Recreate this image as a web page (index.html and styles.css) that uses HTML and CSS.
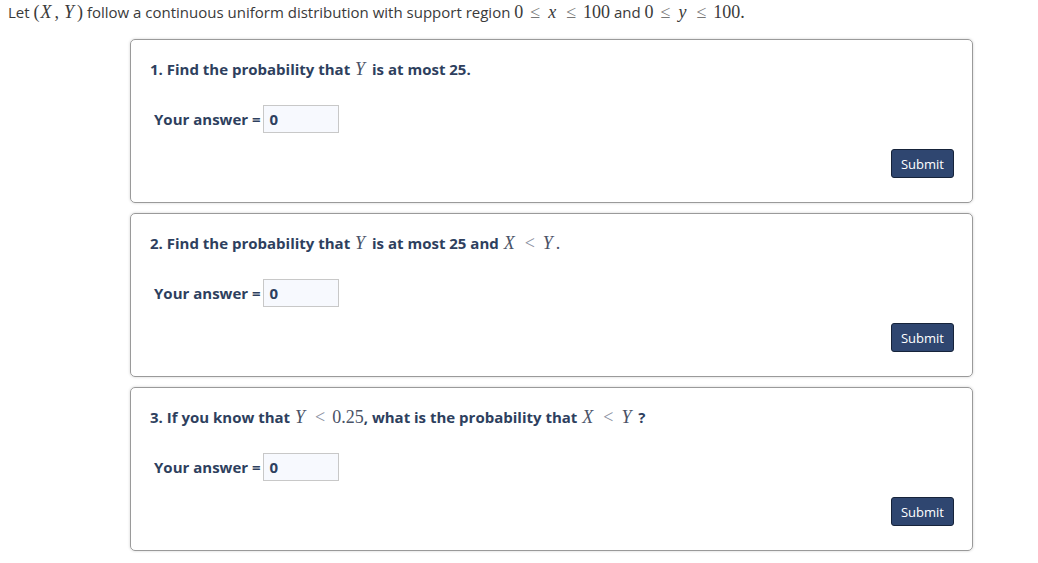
FILE: index.html
```html
<!DOCTYPE html>
<html>
<head>
<meta charset="utf-8">
<link rel="stylesheet" href="styles.css">
</head>
<body>
<p class="intro">Let <span class="m">(<i>X</i>,<span class="sp"></span><i>Y</i>)</span> follow a continuous uniform distribution with support region <span class="m">0<span class="rel">≤</span><i>x</i><span class="rel">≤</span>100</span> and <span class="m">0<span class="rel">≤</span><i>y</i><span class="rel">≤</span>100.</span></p>
<div class="cards">
  <div class="card">
    <p class="q">1. Find the probability that <span class="m"><i>Y</i></span> is at most 25.</p>
    <div class="ans"><span class="lbl">Your answer =</span><span class="inp">0</span></div>
    <div class="actions"><button class="btn">Submit</button></div>
  </div>
  <div class="card">
    <p class="q">2. Find the probability that <span class="m"><i>Y</i></span> is at most 25 and <span class="m"><i>X</i><span class="rel">&lt;</span><i>Y</i>.</span></p>
    <div class="ans"><span class="lbl">Your answer =</span><span class="inp">0</span></div>
    <div class="actions"><button class="btn">Submit</button></div>
  </div>
  <div class="card">
    <p class="q">3. If you know that <span class="m"><i>Y</i><span class="rel">&lt;</span>0.25</span>, what is the probability that <span class="m"><i>X</i><span class="rel">&lt;</span><i>Y</i></span> ?</p>
    <div class="ans"><span class="lbl">Your answer =</span><span class="inp">0</span></div>
    <div class="actions"><button class="btn">Submit</button></div>
  </div>
</div>
</body>
</html>
```
FILE: styles.css
```css
html, body { margin: 0; padding: 0; background: #fff; }
body { padding: 2px 8px; font-family: "Open Sans", "Liberation Sans", sans-serif; font-size: 15px; color: #3a3a3a; }
.intro { margin: 0; line-height: 20px; }
.m { font-family: "Liberation Serif", "DejaVu Serif", serif; font-size: 18px; font-weight: normal; color: #3a3a3a; line-height: 0; }
.m i { padding: 0 3px 0 1px; }
.rel { margin: 0 7px; color: #777; }
.sp { display: inline-block; width: 4px; }
.q .m { color: #4a5266; }
.q .m .rel { color: #8a8fa0; }
.cards { margin: 17px 0 0 122px; width: 843px; display: flex; flex-direction: column; gap: 10px; }
.card { border: 1px solid #9a9a9a; border-radius: 5px; box-shadow: 0 0 3px rgba(0,0,0,0.18); padding: 19px 18px 24px 19px; }
.q { margin: 0; line-height: 20px; font-weight: 700; color: #2e3f5e; }
.ans { margin-top: 26px; margin-left: 4px; display: flex; align-items: center; gap: 2px; line-height: 20px; }
.lbl { font-weight: 700; color: #2e3f5e; }
.inp { box-sizing: border-box; width: 76px; height: 28px; border: 1px solid #c8c8c8; background: #f7f9fe; padding: 0 6px; font-weight: 700; color: #2e3f5e; line-height: 26px; }
.actions { margin-top: 16px; display: flex; justify-content: flex-end; }
.btn { box-sizing: border-box; width: 63px; height: 29px; background: #2f4670; color: #fff; border: 1px solid #16233a; border-radius: 3px; font-family: "Open Sans", "Liberation Sans", sans-serif; font-size: 13px; padding: 0; }
```
